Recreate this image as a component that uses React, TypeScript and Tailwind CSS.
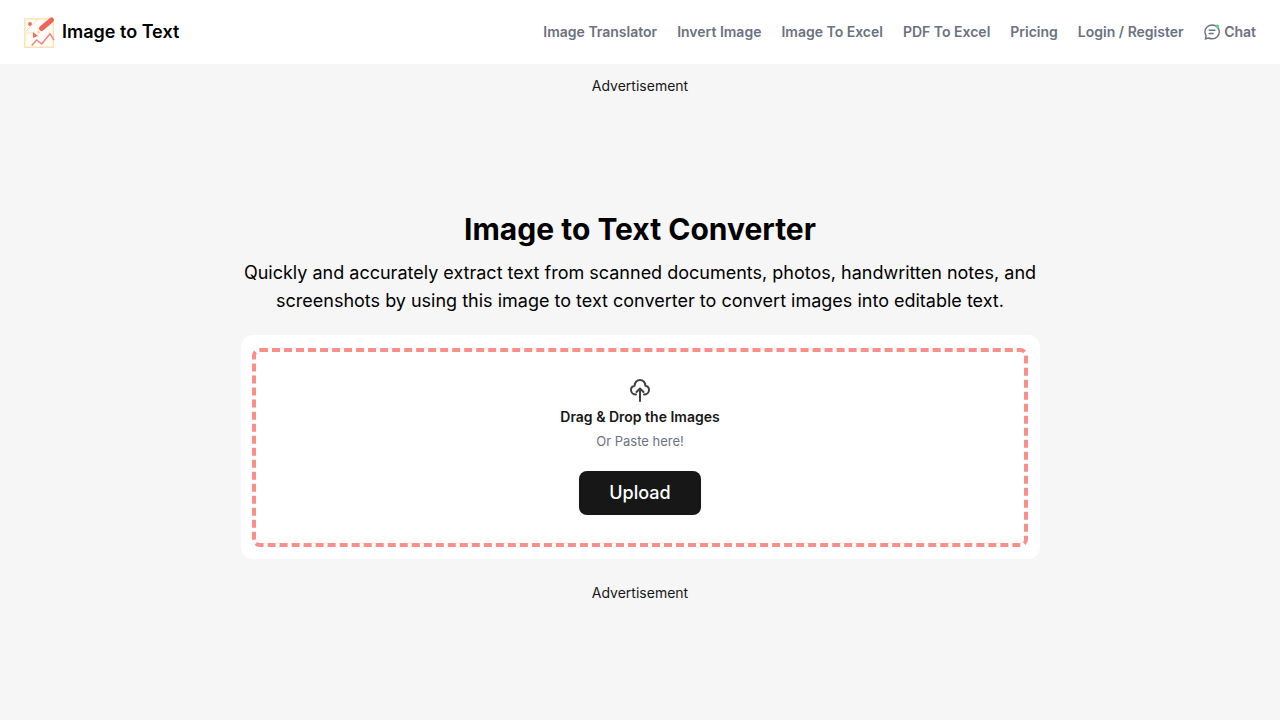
const navLinks = ['Image Translator', 'Invert Image', 'Image To Excel', 'PDF To Excel', 'Pricing', 'Login / Register']

function Logo() {
  return (
    <svg width="32" height="32" viewBox="1 0 32 32" fill="none">
      <rect x="1.8" y="2.8" width="28.5" height="28.5" fill="#fffcf5" stroke="#fbe3b8" strokeWidth="1.5" />
      <circle cx="7" cy="8" r="2" fill="#f2706a" />
      <path d="M15 3 L3 15 M3 17 H12" stroke="#fbe3b8" strokeWidth="1" />
      <path d="M18.5 12.5 L28.5 4" stroke="#f2635c" strokeWidth="5" strokeLinecap="round" />
      <path d="M15 14 L17.5 17 L14 17.5 Z" fill="#fbd9a6" />
      <path d="M10 16 L15 20 L10 22 Z" fill="#f2706a" />
      <path d="M8.7 29.5 L13.7 24 L18.7 28 L27 17.7 L31 24" stroke="#f2837c" strokeWidth="1.5" />
    </svg>
  )
}

function ChatIcon() {
  return (
    <svg width="16" height="16" viewBox="0 0 16 16" fill="none" stroke="#6b7280" strokeWidth="1.4" strokeLinecap="round">
      <path d="M8.2 1 C4.2 1 0.9 4 0.9 7.8 C0.9 9.2 1.3 10.4 2.1 11.5 L1.4 14.8 L4.8 14 C5.8 14.5 7 14.8 8.2 14.8 C12.2 14.8 15.3 11.7 15.3 7.8 C15.3 4 12.2 1 8.2 1 Z" />
      <path d="M5.2 6.3 H11 M5.2 9.5 H9.2" />
      <circle cx="13.2" cy="2.2" r="1.8" fill="#4ade80" stroke="none" />
    </svg>
  )
}

function UploadIcon() {
  return (
    <svg width="24" height="26" viewBox="0 0 24 26" fill="none" stroke="#404040" strokeWidth="2" strokeLinecap="round" strokeLinejoin="round">
      <path d="M8 16.5 C5.3 16.5 3 14.6 3 12 C3 9.9 4.5 8.2 6.5 7.8 C7 4.5 9.2 2 12 2 C14.8 2 17 4.5 17.5 7.8 C19.5 8.2 21 9.9 21 12 C21 14.6 18.7 16.5 16 16.5" />
      <path d="M12 23 V10.5 M8.5 14 L12 10.5 L15.5 14" />
    </svg>
  )
}

export default function App() {
  return (
    <div className="min-h-screen bg-[#f6f6f6] font-['Inter',sans-serif] text-[#171717]">
      <header className="h-16 bg-white flex items-center justify-between pl-6 pr-6">
        <div className="flex items-center gap-[6px]">
          <Logo />
          <span className="text-lg font-semibold text-black">Image to Text</span>
        </div>
        <nav className="flex items-center gap-5 text-sm font-semibold text-[#6b7280]">
          {navLinks.map(link => (
            <a key={link} href="#">{link}</a>
          ))}
          <a href="#" className="flex items-center gap-[4.5px]">
            <ChatIcon />
            Chat
          </a>
        </nav>
      </header>

      <main className="flex flex-col items-center">
        <p className="mt-[13px] text-sm leading-[18px]">Advertisement</p>

        <h1 className="mt-[116px] text-[30px] leading-9 font-bold text-black">Image to Text Converter</h1>
        <p className="mt-3 w-[800px] text-center text-lg leading-7 text-black">
          Quickly and accurately extract text from scanned documents, photos, handwritten notes, and screenshots by using this image to text converter to convert images into editable text.
        </p>

        <section className="mt-5 w-[799px] ml-px h-[224px] bg-white rounded-xl pt-[13px] pb-3 pl-[11px] pr-3">
          <div className="h-full border-4 border-dashed border-[#f88f88] rounded-lg flex flex-col items-center pt-[26px]">
            <UploadIcon />
            <p className="mt-[3px] text-sm leading-5 font-semibold">Drag &amp; Drop the Images</p>
            <p className="mt-1 text-[13px] leading-5 text-[#6b7280]">Or Paste here!</p>
            <button className="mt-5 h-11 w-[122px] rounded-lg bg-[#171717] text-lg font-medium text-white">Upload</button>
          </div>
        </section>

        <p className="mt-[25px] text-sm leading-[18px]">Advertisement</p>
      </main>
    </div>
  )
}
